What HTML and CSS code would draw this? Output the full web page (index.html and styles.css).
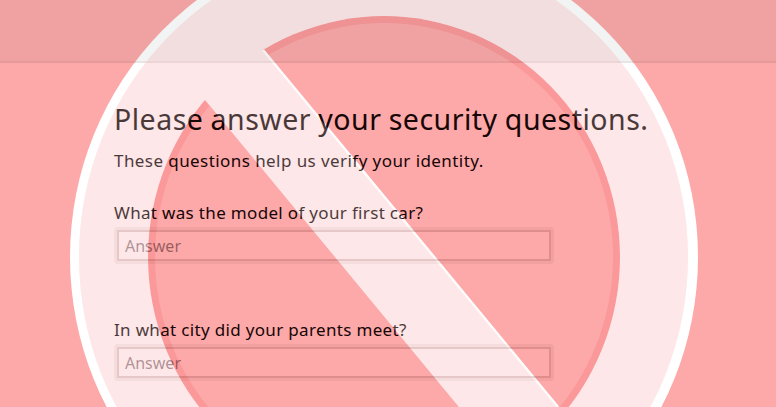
FILE: index.html
```html
<!DOCTYPE html>
<html lang="en">
<head>
<meta charset="utf-8">
<title>Security questions</title>
<link rel="stylesheet" href="styles.css">
</head>
<body>
<div class="page">
  <svg class="sign" viewBox="0 0 776 407" aria-hidden="true">
    <defs>
      <clipPath id="openings">
        <path d="M263 50L558 407L776 407V0H221.700Z M205 100L458.700 407H0V-148Z"/>
      </clipPath>
      <clipPath id="disc"><ellipse cx="384" cy="257" rx="236" ry="241"/></clipPath>
    </defs>
    <ellipse cx="384" cy="257" rx="314" ry="320" fill="#fff"/>
    <ellipse cx="383.500" cy="257" rx="304.500" ry="311.500" fill="#fde7e8"/>
    <g clip-path="url(#openings)">
      <ellipse cx="384" cy="257" rx="236" ry="241" fill="#fb9899"/>
      <ellipse cx="384" cy="257" rx="229" ry="234" fill="#fda9a9"/>
    </g>
    <path d="M263 50L558 407" stroke="#fff" stroke-width="2.500" clip-path="url(#disc)"/>
  </svg>
  <header class="topbar"></header>
  <main class="content">
    <h1 class="title">Please answer your security questions.</h1>
    <p class="intro">These questions help us verify your identity.</p>
    <form class="questions">
      <div class="question">
        <label class="label" for="car">What was the model of your first car?</label>
        <div class="field"><input class="input" id="car" type="text" placeholder="Answer"></div>
      </div>
      <div class="question">
        <label class="label" for="city">In what city did your parents meet?</label>
        <div class="field"><input class="input" id="city" type="text" placeholder="Answer"></div>
      </div>
    </form>
  </main>
  <svg class="sign veil" viewBox="0 0 776 407" aria-hidden="true">
    <defs>
      <mask id="ring">
        <ellipse cx="383.500" cy="257" rx="304.500" ry="311.500" fill="#fff"/>
        <ellipse cx="384" cy="257" rx="236" ry="241" fill="#000" clip-path="url(#openings)"/>
      </mask>
    </defs>
    <rect width="776" height="407" fill="#fde7e8" mask="url(#ring)"/>
  </svg>
</div>
</body>
</html>
```
FILE: styles.css
```css
* {
  box-sizing: border-box;
}

body {
  margin: 0;
  font-family: "Noto Sans", "Open Sans", sans-serif;
  color: #160606;
}

.page {
  position: relative;
  width: 776px;
  height: 407px;
  overflow: hidden;
  background: #fda9a9;
}

.sign {
  position: absolute;
  inset: 0;
  width: 776px;
  height: 407px;
}

.veil {
  opacity: 0.22;
  pointer-events: none;
}

.topbar {
  position: relative;
  height: 63px;
  background: rgba(40, 50, 50, 0.06);
  border-bottom: 2px solid rgba(90, 20, 20, 0.06);
}

.content {
  position: relative;
  padding: 36px 0 0 114px;
  white-space: nowrap;
}

.title {
  margin: 0;
  font-size: 28.5px;
  line-height: 40px;
  font-weight: 400;
  letter-spacing: 0.5px;
  word-spacing: -0.7px;
}

.intro {
  margin: 9px 0 0;
  font-size: 17px;
  line-height: 26px;
  letter-spacing: 0.43px;
}

.questions {
  display: flex;
  flex-direction: column;
  gap: 53px;
  margin-top: 26px;
}

.question {
  display: flex;
  flex-direction: column;
  align-items: flex-start;
}

.label {
  font-size: 17px;
  line-height: 26px;
  letter-spacing: 0.33px;
}

.field {
  width: 440px;
  height: 37px;
  margin-top: 1px;
  padding: 3px;
  border-radius: 4px;
  background: transparent;
  box-shadow: inset 0 0 0 3px rgba(90, 10, 10, 0.06);
}

.input {
  display: block;
  width: 434px;
  height: 31px;
  padding: 0 6px;
  border: 2px solid rgba(110, 30, 30, 0.2);
  border-radius: 1px;
  outline: 0;
  background: transparent;
  font: inherit;
  font-size: 16px;
}

.input::placeholder {
  color: rgba(70, 25, 30, 0.55);
  opacity: 1;
}
```
